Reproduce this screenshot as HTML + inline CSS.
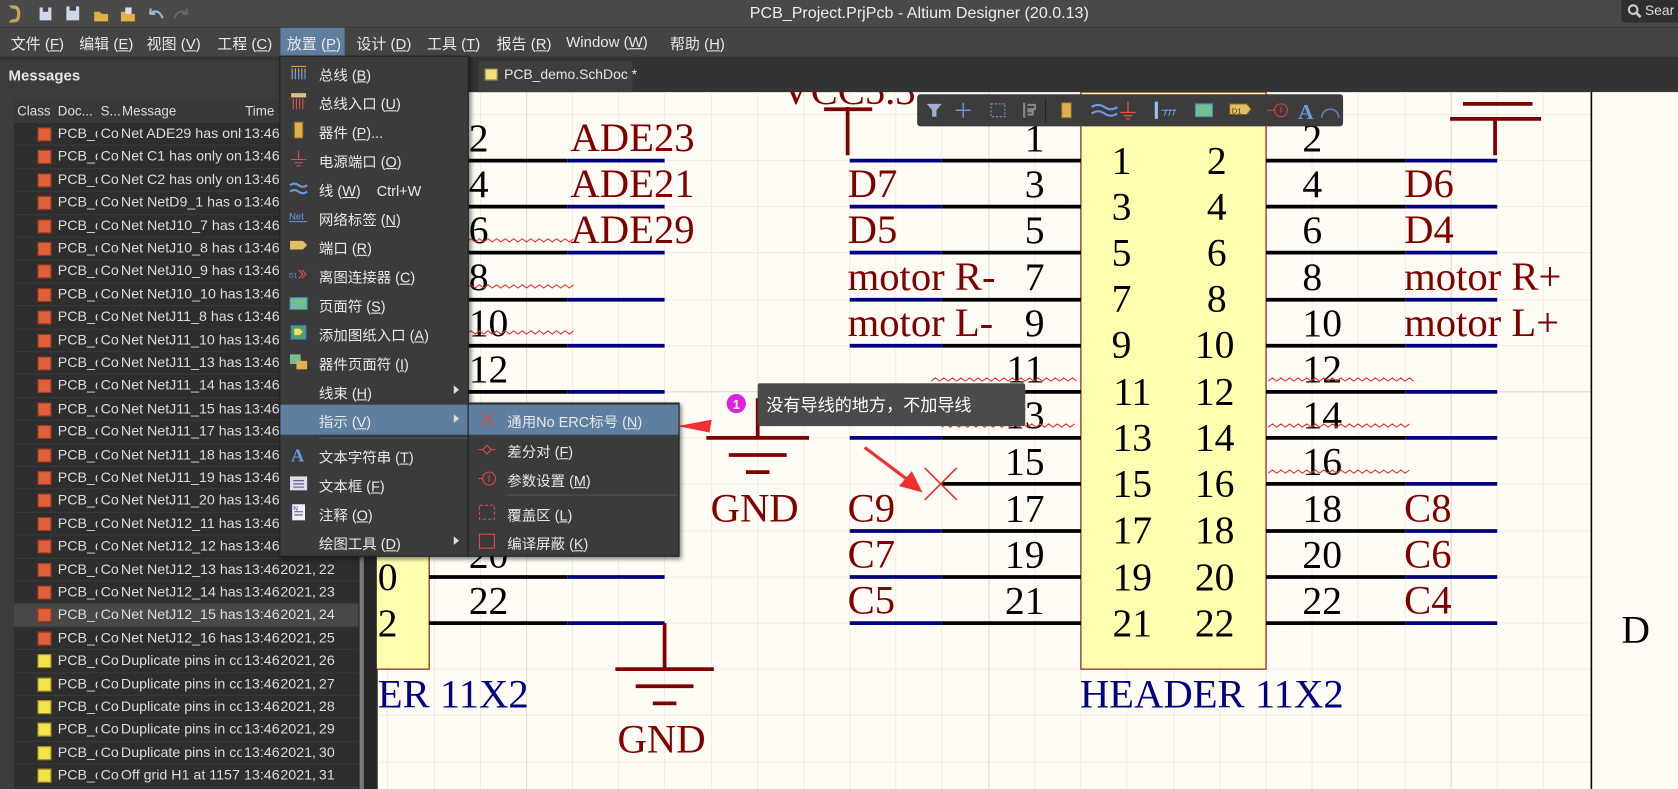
<!DOCTYPE html>
<html><head><meta charset="utf-8">
<style>
*{margin:0;padding:0;box-sizing:border-box}
body{width:1678px;height:789px;overflow:hidden;background:#333;font-family:"Liberation Sans","Noto Sans CJK SC",sans-serif;}
#w{position:absolute;left:0;top:0;width:1568px;height:737px;transform:scale(1.0702,1.0706);transform-origin:0 0;overflow:hidden}
.a{position:absolute}
.ui{color:#e6e6e6;font-size:13.5px;white-space:nowrap}
.mb span{position:absolute;top:5px;font-size:14px;color:#e8e8e8}
.row{position:absolute;left:13px;width:322px;height:21.4px;font-size:13.3px;color:#ddd;border-bottom:1px solid #3a3a3a}
.row div{position:absolute;top:2px;overflow:hidden;white-space:nowrap}
.sq{position:absolute;left:22px;top:4px;width:13px;height:13px;border:1px solid #9a3a20;background:#e0603a}
.sq.y{border-color:#a09020;background:#f5e34a}
.menu{position:absolute;background:#3b3b3b;border:1px solid #222;box-shadow:2px 2px 4px rgba(0,0,0,.5)}
.mi{position:absolute;left:0;right:0;height:27px;font-size:13.5px;color:#e8e8e8}
.mi .t{position:absolute;left:36px;top:5px;white-space:nowrap}
.mi .ic{position:absolute;left:8px;top:5px;width:18px;height:17px}
.hl{background:#5e7fa0}
.arr{position:absolute;right:8px;top:9px;width:0;height:0;border-left:5px solid #ddd;border-top:4px solid transparent;border-bottom:4px solid transparent}
u{text-decoration:underline}
</style></head><body><div id="w">

<svg class="a" style="left:0;top:0" width="1568" height="737" viewBox="0 0 1568 737" font-family="Liberation Serif,serif">
<rect x="353" y="86" width="1215" height="651" fill="#fffcf6"/>
<g stroke="#f1ede6" stroke-width="1">
<path d="M362 86V737M406 86V737M449 86V737M492 86V737M535 86V737M578 86V737M621 86V737M665 86V737M708 86V737M751 86V737M794 86V737M837 86V737M880 86V737M924 86V737M967 86V737M1010 86V737M1053 86V737M1097 86V737M1140 86V737M1183 86V737M1226 86V737M1269 86V737M1313 86V737M1356 86V737M1399 86V737M1442 86V737"/>
<path d="M353 107H1487M353 150H1487M353 193H1487M353 236H1487M353 280H1487M353 323H1487M353 366H1487M353 409H1487M353 452H1487M353 496H1487M353 539H1487M353 582H1487M353 625H1487M353 668H1487M353 712H1487"/>
</g>
<g stroke="#e0dcd4"><path d="M1356 86V737M924 86V737M492 86V737M353 366H1487"/></g>
<rect x="1487" y="86" width="81" height="651" fill="#fffcf6"/>
<path d="M1487 86V737" stroke="#000" stroke-width="1.5"/>
<rect x="340" y="86" width="61" height="539" fill="#ffffb0" stroke="#800000"/>
<g stroke="#000" stroke-width="3.5"><path d="M401 150H530M401 193H530M401 236H530M401 280H530M401 323H530M401 366H530M401 409H530M401 452H530M401 496H530M401 539H530M401 582H530"/></g>
<g stroke="#000080" stroke-width="3.5"><path d="M530 150H621M530 193H621M530 236H621M530 280H621M530 323H621M530 366H621M530 409H621M530 452H621M530 496H621M530 539H621M530 582H621"/></g>
<g font-size="37" fill="#000"><text x="438" y="141">2</text><text x="438" y="184">4</text><text x="438" y="227">6</text><text x="438" y="271">8</text><text x="438" y="314">10</text><text x="438" y="357">12</text><text x="438" y="573">22</text><text x="438" y="530">20</text>
<text x="353" y="551">0</text><text x="353" y="594">2</text></g>
<g font-size="38" fill="#800000"><text x="533" y="141">ADE23</text><text x="533" y="184">ADE21</text><text x="533" y="227">ADE29</text></g>
<text x="353" y="661" font-size="38" fill="#000080">ER 11X2</text>
<g stroke="#800000" stroke-width="3.5" fill="none"><path d="M708 372V409M660 409H756M681 425H735M697 441H719"/><path d="M621 582V625M575 625H667M594 641H648M610 657H632"/><path d="M792 100V145M770 102H815"/><path d="M1367 97H1432M1355 111H1440M1397 111V145"/></g>
<g font-size="38" fill="#800000"><text x="664" y="487">GND</text><text x="577" y="703">GND</text><text x="730" y="97">VCC5.3</text></g>
<rect x="1010" y="86" width="173" height="539" fill="#ffffb0" stroke="#800000"/>
<g stroke="#000" stroke-width="3.5"><path d="M880 150H1010M880 193H1010M880 236H1010M880 280H1010M880 323H1010M880 366H1010M880 409H1010M880 452H1010M880 496H1010M880 539H1010M880 582H1010"/><path d="M1183 150H1313M1183 193H1313M1183 236H1313M1183 280H1313M1183 323H1313M1183 366H1313M1183 409H1313M1183 452H1313M1183 496H1313M1183 539H1313M1183 582H1313"/></g>
<g stroke="#000080" stroke-width="3.5"><path d="M794 150H880M794 193H880M794 236H880M794 280H880M794 323H880M794 366H880M794 409H880M794 496H880M794 539H880M794 582H880"/><path d="M1313 150H1399M1313 193H1399M1313 236H1399M1313 280H1399M1313 323H1399M1313 366H1399M1313 409H1399M1313 452H1399M1313 496H1399M1313 539H1399M1313 582H1399"/></g>
<g font-size="37" fill="#000" text-anchor="end"><text x="976" y="141">1</text><text x="976" y="184">3</text><text x="976" y="227">5</text><text x="976" y="271">7</text><text x="976" y="314">9</text><text x="976" y="357">11</text><text x="976" y="400">13</text><text x="976" y="443">15</text><text x="976" y="487">17</text><text x="976" y="530">19</text><text x="976" y="573">21</text></g>
<g font-size="37" fill="#000"><text x="1217" y="141">2</text><text x="1217" y="184">4</text><text x="1217" y="227">6</text><text x="1217" y="271">8</text><text x="1217" y="314">10</text><text x="1217" y="357">12</text><text x="1217" y="400">14</text><text x="1217" y="443">16</text><text x="1217" y="487">18</text><text x="1217" y="530">20</text><text x="1217" y="573">22</text></g>
<g font-size="37" fill="#000" text-anchor="middle"><text x="1048" y="162">1</text><text x="1048" y="205">3</text><text x="1048" y="248">5</text><text x="1048" y="291">7</text><text x="1048" y="334">9</text><text x="1058" y="378">11</text><text x="1058" y="421">13</text><text x="1058" y="464">15</text><text x="1058" y="507">17</text><text x="1058" y="551">19</text><text x="1058" y="594">21</text>
<text x="1137" y="162">2</text><text x="1137" y="205">4</text><text x="1137" y="248">6</text><text x="1137" y="291">8</text><text x="1135" y="334">10</text><text x="1135" y="378">12</text><text x="1135" y="421">14</text><text x="1135" y="464">16</text><text x="1135" y="507">18</text><text x="1135" y="551">20</text><text x="1135" y="594">22</text></g>
<g font-size="38" fill="#800000"><text x="792" y="184">D7</text><text x="792" y="227">D5</text><text x="792" y="271">motor R-</text><text x="792" y="314">motor L-</text><text x="792" y="487">C9</text><text x="792" y="530">C7</text><text x="792" y="573">C5</text>
<text x="1312" y="184">D6</text><text x="1312" y="227">D4</text><text x="1312" y="271">motor R+</text><text x="1312" y="314">motor L+</text><text x="1312" y="487">C8</text><text x="1312" y="530">C6</text><text x="1312" y="573">C4</text></g>
<text x="1009" y="661" font-size="38" fill="#000080">HEADER 11X2</text>
<text x="1515" y="600" font-size="37" fill="#000">D</text>
<g stroke="#e03030" stroke-width="1" fill="none">
<path d="M436 226l4 -3l4 3l4 -3l4 3l4 -3l4 3l4 -3l4 3l4 -3l4 3l4 -3l4 3l4 -3l4 3l4 -3l4 3l4 -3l4 3l4 -3l4 3l4 -3l4 3l4 -3l4 3l4 -3"/>
<path d="M436 269l4 -3l4 3l4 -3l4 3l4 -3l4 3l4 -3l4 3l4 -3l4 3l4 -3l4 3l4 -3l4 3l4 -3l4 3l4 -3l4 3l4 -3l4 3l4 -3l4 3l4 -3l4 3l4 -3"/>
<path d="M436 312l4 -3l4 3l4 -3l4 3l4 -3l4 3l4 -3l4 3l4 -3l4 3l4 -3l4 3l4 -3l4 3l4 -3l4 3l4 -3l4 3l4 -3l4 3l4 -3l4 3l4 -3l4 3l4 -3"/>
<path d="M870 356l4 -3l4 3l4 -3l4 3l4 -3l4 3l4 -3l4 3l4 -3l4 3l4 -3l4 3l4 -3l4 3l4 -3l4 3l4 -3l4 3l4 -3l4 3l4 -3l4 3l4 -3l4 3l4 -3l4 3l4 -3l4 3l4 -3l4 3l4 -3l4 3l4 -3l4 3"/>
<path d="M1185 356l4 -3l4 3l4 -3l4 3l4 -3l4 3l4 -3l4 3l4 -3l4 3l4 -3l4 3l4 -3l4 3l4 -3l4 3l4 -3l4 3l4 -3l4 3l4 -3l4 3l4 -3l4 3l4 -3l4 3l4 -3l4 3l4 -3l4 3l4 -3l4 3l4 -3l4 3"/>
<path d="M880 399l4 -3l4 3l4 -3l4 3l4 -3l4 3l4 -3l4 3l4 -3l4 3l4 -3l4 3l4 -3l4 3l4 -3l4 3l4 -3l4 3l4 -3l4 3l4 -3l4 3l4 -3l4 3l4 -3l4 3l4 -3l4 3l4 -3l4 3l4 -3"/>
<path d="M1185 399l4 -3l4 3l4 -3l4 3l4 -3l4 3l4 -3l4 3l4 -3l4 3l4 -3l4 3l4 -3l4 3l4 -3l4 3l4 -3l4 3l4 -3l4 3l4 -3l4 3l4 -3l4 3l4 -3l4 3l4 -3l4 3l4 -3l4 3l4 -3l4 3l4 -3"/>
<path d="M1185 442l4 -3l4 3l4 -3l4 3l4 -3l4 3l4 -3l4 3l4 -3l4 3l4 -3l4 3l4 -3l4 3l4 -3l4 3l4 -3l4 3l4 -3l4 3l4 -3l4 3l4 -3l4 3l4 -3l4 3l4 -3l4 3l4 -3l4 3l4 -3l4 3l4 -3"/>
</g>
<path d="M864 437l30 30M894 437l-30 30" stroke="#e03030" stroke-width="1.5"/>
<path d="M808 418L848 448" stroke="#f03030" stroke-width="3"/><path d="M862 460L840 454L852 440Z" fill="#f03030"/>
<path d="M633 398L665 392L663 404Z" fill="#f03030"/>
<rect x="708" y="358" width="250" height="40" rx="2" fill="#4a4a4a"/>
<text x="716" y="384" font-family="Liberation Sans,Noto Sans CJK SC,sans-serif" font-size="16" fill="#fff">没有导线的地方，不加导线</text>
<circle cx="688" cy="377" r="9" fill="#e020e0"/><text x="688" y="382" text-anchor="middle" font-family="Liberation Sans,sans-serif" font-size="12" font-weight="bold" fill="#fff">1</text>
</svg>

<div class="a" style="left:857px;top:88px;width:398px;height:30px;background:#3c3c3c;border-radius:3px">
<svg width="398" height="30" viewBox="0 0 398 30">
<path d="M9 9h14l-5 6v6h-4v-6z" fill="#9ab4d0"/>
<path d="M43 8v14M36 15h14" stroke="#6a9ae0" stroke-width="1.3"/>
<rect x="69" y="9" width="13" height="12" fill="none" stroke="#6a9ae0" stroke-dasharray="2 1.5"/>
<path d="M100 8v14M103 10h7v4h-7M103 16h5v3h-5" stroke="#888" stroke-width="2" fill="none"/>
<path d="M120 4v22" stroke="#222" stroke-width="1"/>
<rect x="135" y="8" width="9" height="14" fill="#e0b050" stroke="#8a6a20"/>
<path d="M163 12q6 -4 12 0t12 0M163 18q6 -4 12 0t12 0" stroke="#6a9ae0" stroke-width="2" fill="none"/>
<path d="M197 7v10M190 17h14M193 20h8M195 23h4" stroke="#e05040" stroke-width="1.3"/>
<rect x="222" y="7" width="3" height="16" fill="#9ac0f0"/><path d="M228 15h14M231 20l2-6M235 20l2-6M239 20l2-6" stroke="#6a9ae0"/>
<rect x="260" y="9" width="16" height="12" fill="#70c090" stroke="#4a80d0"/>
<path d="M292 9h16l4 5l-4 5h-16z" fill="#e0c060" stroke="#806020"/><text x="294" y="18" font-size="7" fill="#333">D1</text>
<circle cx="340" cy="15" r="6" fill="none" stroke="#e04040"/><path d="M327 15h7M340 12v5" stroke="#e04040"/>
<text x="356" y="23" font-family="Liberation Serif,serif" font-size="20" font-weight="bold" fill="#6a9ae0">A</text>
<path d="M378 22a8 8 0 0 1 16 0" stroke="#5a80c0" fill="none" stroke-width="1.5"/>
</svg></div>

<div class="a" style="left:0;top:0;width:1568px;height:26px;background:#494949;border-bottom:1px solid #3a3a3a"></div>
<svg class="a" style="left:4px;top:3px" width="180" height="20" viewBox="0 0 180 20">
<path d="M4 2h5q6 0 6 8t-6 8h-5l3-3h2q3 0 3-5t-3-5h-2z" fill="#c9a25a"/>
<rect x="33" y="4" width="11" height="12" fill="#cfd8e6"/><rect x="36" y="4" width="5" height="4" fill="#445"/>
<rect x="58" y="3" width="12" height="13" fill="#cfd8e6"/><rect x="61" y="3" width="6" height="4" fill="#445"/>
<path d="M84 8h5l2 2h6v7h-13z" fill="#e0b040"/>
<path d="M109 8h5l2 2h6v7h-13z" fill="#e0b040"/><rect x="113" y="4" width="6" height="6" fill="#dde"/>
<path d="M136 10q8 -6 12 4M136 10l1 -5M136 10l5 0" stroke="#9ab4d0" stroke-width="2" fill="none"/>
<path d="M171 10q-8 -6 -12 4M171 10l-1 -5M171 10l-5 0" stroke="#666" stroke-width="2" fill="none"/>
</svg>
<div class="a ui" style="left:0;width:1568px;top:4px;text-align:center;font-size:15px;color:#eee;padding-left:150px">PCB_Project.PrjPcb - Altium Designer (20.0.13)</div>
<div class="a" style="left:1515px;top:0;width:60px;height:21px;background:#2f2f2f;border-radius:0 0 0 4px;color:#ddd;font-size:13px;padding:2px 0 0 22px">Sear</div>
<svg class="a" style="left:1520px;top:3px" width="14" height="14"><circle cx="6" cy="6" r="4" stroke="#ccc" stroke-width="2" fill="none"/><path d="M9 9l4 4" stroke="#ccc" stroke-width="2.5"/></svg>

<div class="a mb" style="left:0;top:26px;width:1568px;height:27px;background:#444">
<div class="a" style="left:262px;top:0;width:60px;height:27px;background:#5e7fa0"></div>
<span style="left:10px">文件 (<u>F</u>)</span><span style="left:74px">编辑 (<u>E</u>)</span><span style="left:137px">视图 (<u>V</u>)</span><span style="left:203px">工程 (<u>C</u>)</span><span style="left:268px">放置 (<u>P</u>)</span><span style="left:333px">设计 (<u>D</u>)</span><span style="left:399px">工具 (<u>T</u>)</span><span style="left:464px">报告 (<u>R</u>)</span><span style="left:529px">Window (<u>W</u>)</span><span style="left:626px">帮助 (<u>H</u>)</span>
</div>
<div class="a" style="left:0;top:53px;width:1568px;height:33px;background:#333"></div>
<div class="a ui" style="left:425px;top:63px;color:#bbb">e</div>
<div class="a ui" style="left:447px;top:57px;width:144px;height:29px;background:#3e3e3e;border-radius:3px 3px 0 0;padding:5px 0 0 24px;font-size:13px">PCB_demo.SchDoc *</div>
<div class="a" style="left:453px;top:64px;width:12px;height:11px;background:#f0e080;border:1px solid #a09040"></div>

<div class="a" style="left:0;top:56px;width:352px;height:681px;background:#3c3c3c"></div>
<div class="a ui" style="left:8px;top:62px;font-weight:bold;font-size:14px">Messages</div>
<div class="a" style="left:13px;top:93px;width:322px;height:644px;background:#2e2e2e"></div>
<div class="a" style="left:13px;top:93px;width:322px;height:22px;background:#383838;font-size:12.5px;color:#ddd">
<div class="a" style="left:3px;top:4px">Class</div><div class="a" style="left:41px;top:4px">Doc...</div><div class="a" style="left:81px;top:4px">S...</div><div class="a" style="left:101px;top:4px">Message</div><div class="a" style="left:216px;top:4px">Time</div>
</div>
<div class="a" style="left:335px;top:93px;width:17px;height:644px;background:#262626"></div>
<div class="a" style="left:336px;top:93px;width:4px;height:644px;background:#777"></div>
<div id="rows"></div>

<div class="menu" style="left:261px;top:52px;width:177px;height:468px">
<div class="mi" style="top:1px"><svg class="ic"><path d="M2 3h14M3 5v10M6 5v10M9 5v10M12 5v10M15 5v10" stroke="#e0b050"/><path d="M3 8v7M6 8v7M9 8v7M12 8v7M15 8v7" stroke="#6a9ae0"/></svg><span class="t">总线 (<u>B</u>)</span></div>
<div class="mi" style="top:28px"><svg class="ic"><rect x="2" y="1" width="14" height="4" fill="#e0c080"/><path d="M4 6v10M7 6v10M10 6v10M13 6v10" stroke="#e05050"/></svg><span class="t">总线入口 (<u>U</u>)</span></div>
<div class="mi" style="top:55px"><svg class="ic"><rect x="5" y="1" width="8" height="15" fill="#e0b050" stroke="#806020"/></svg><span class="t">器件 (<u>P</u>)...</span></div>
<div class="mi" style="top:82px"><svg class="ic"><path d="M9 1v8M2 9h14M5 12h8M7 15h4" stroke="#e05040"/></svg><span class="t">电源端口 (<u>O</u>)</span></div>
<div class="mi" style="top:109px"><svg class="ic"><path d="M1 6q4-3 8 0t8 0M1 12q4-3 8 0t8 0" stroke="#6a9ae0" stroke-width="2" fill="none"/></svg><span class="t">线 (<u>W</u>)&nbsp;&nbsp;&nbsp;&nbsp;Ctrl+W</span></div>
<div class="mi" style="top:136px"><svg class="ic"><text x="0" y="11" font-size="9" fill="#6a9ae0">Net</text><path d="M0 13h17" stroke="#6a9ae0"/></svg><span class="t">网络标签 (<u>N</u>)</span></div>
<div class="mi" style="top:163px"><svg class="ic"><path d="M1 4h12l4 4l-4 4h-12z" fill="#e0c060"/></svg><span class="t">端口 (<u>R</u>)</span></div>
<div class="mi" style="top:190px"><svg class="ic"><text x="0" y="11" font-size="6" fill="#6a9ae0">D1</text><path d="M9 4l4 4l-4 4M12 4l4 4l-4 4" stroke="#e05050" fill="none"/></svg><span class="t">离图连接器 (<u>C</u>)</span></div>
<div class="mi" style="top:217px"><svg class="ic"><rect x="1" y="3" width="16" height="11" fill="#70c090" stroke="#4a80d0"/></svg><span class="t">页面符 (<u>S</u>)</span></div>
<div class="mi" style="top:244px"><svg class="ic"><rect x="2" y="2" width="14" height="13" fill="#50a070" stroke="#3070c0"/><path d="M5 5h5l3 3l-3 3h-5z" fill="#f0e060"/></svg><span class="t">添加图纸入口 (<u>A</u>)</span></div>
<div class="mi" style="top:271px"><svg class="ic"><rect x="1" y="2" width="10" height="9" fill="#70c090"/><rect x="7" y="8" width="10" height="8" fill="#e0b050"/></svg><span class="t">器件页面符 (<u>I</u>)</span></div>
<div class="mi" style="top:298px"><span class="t">线束 (<u>H</u>)</span><i class="arr"></i></div>
<div class="mi hl" style="top:325px;height:28px"><span class="t">指示 (<u>V</u>)</span><i class="arr"></i></div>
<div class="a" style="left:36px;right:0;top:356px;height:1px;background:#555"></div>
<div class="mi" style="top:358px"><svg class="ic"><text x="2" y="15" font-family="Liberation Serif,serif" font-weight="bold" font-size="17" fill="#6a9ae0">A</text></svg><span class="t">文本字符串 (<u>T</u>)</span></div>
<div class="mi" style="top:385px"><svg class="ic"><rect x="1" y="2" width="16" height="13" fill="#dde"/><path d="M4 6h10M4 9h10M4 12h10" stroke="#557"/></svg><span class="t">文本框 (<u>F</u>)</span></div>
<div class="mi" style="top:412px"><svg class="ic"><rect x="3" y="1" width="12" height="15" fill="#eef"/><path d="M5 8h8M5 11h8" stroke="#557"/><text x="4" y="7" font-size="6" fill="#24a">N</text></svg><span class="t">注释 (<u>O</u>)</span></div>
<div class="mi" style="top:439px"><span class="t">绘图工具 (<u>D</u>)</span><i class="arr"></i></div>
</div>
<div class="menu" style="left:437px;top:376px;width:198px;height:144px">
<div class="mi hl" style="top:1px;height:28px"><svg class="ic"><path d="M3 2l13 13M16 2l-13 13" stroke="#e04848" stroke-width="1.3"/></svg><span class="t">通用No ERC标号 (<u>N</u>)</span></div>
<div class="mi" style="top:29px"><svg class="ic"><path d="M1 9h4M13 9h4M5 9l4-4l4 4l-4 4z" stroke="#e04848" fill="none"/></svg><span class="t">差分对 (<u>F</u>)</span></div>
<div class="mi" style="top:56px"><svg class="ic"><circle cx="11" cy="9" r="6" stroke="#e04848" fill="none"/><path d="M1 9h4M11 6v6" stroke="#e04848"/></svg><span class="t">参数设置 (<u>M</u>)</span></div>
<div class="a" style="left:36px;right:0;top:85px;height:1px;background:#555"></div>
<div class="mi" style="top:88px"><svg class="ic"><rect x="2" y="2" width="14" height="13" stroke="#e04848" stroke-dasharray="3 2" fill="none"/></svg><span class="t">覆盖区 (<u>L</u>)</span></div>
<div class="mi" style="top:115px"><svg class="ic"><rect x="2" y="2" width="14" height="13" stroke="#e04848" fill="none"/></svg><span class="t">编译屏蔽 (<u>K</u>)</span></div>
</div>

</div>
<script>
var m=["Net ADE29 has only","Net C1 has only one","Net C2 has only one","Net NetD9_1 has o","Net NetJ10_7 has o","Net NetJ10_8 has o","Net NetJ10_9 has o","Net NetJ10_10 has","Net NetJ11_8 has o","Net NetJ11_10 has","Net NetJ11_13 has","Net NetJ11_14 has","Net NetJ11_15 has","Net NetJ11_17 has","Net NetJ11_18 has","Net NetJ11_19 has","Net NetJ11_20 has","Net NetJ12_11 has","Net NetJ12_12 has","Net NetJ12_13 has","Net NetJ12_14 has","Net NetJ12_15 has","Net NetJ12_16 has","Duplicate pins in co","Duplicate pins in co","Duplicate pins in co","Duplicate pins in co","Duplicate pins in co","Off grid H1 at 1157"];
var h="";for(var i=0;i<m.length;i++){var y=115+i*21.4;var hl=i==21?"background:#484848;":"";
h+='<div class="row" style="top:'+y+'px;'+hl+'"><i class="sq'+(i>=23?' y':'')+'"></i><div style="left:41px;width:37px">PCB_demo</div><div style="left:81px;width:18px">Co</div><div style="left:100px;width:113px">'+m[i]+'</div><div style="left:215px;width:33px">13:46</div><div style="left:249px;width:34px">2021,</div><div style="left:285px">'+(i+3)+'</div></div>';}
document.getElementById("rows").innerHTML=h;
</script>
</body></html>
